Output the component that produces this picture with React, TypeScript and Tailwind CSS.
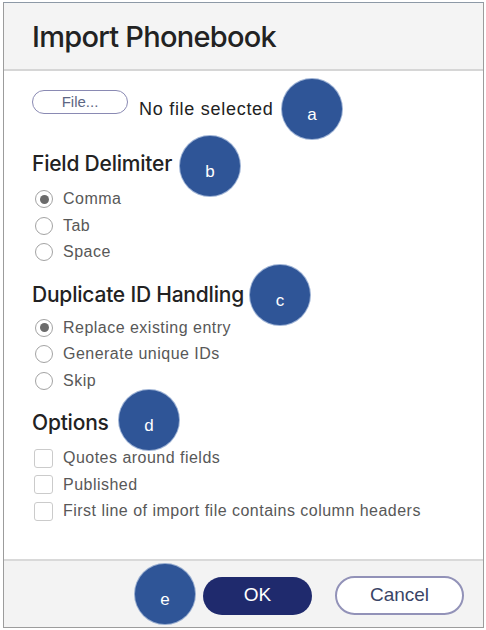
import React from "react";

const HEAD = { fontFamily: "Inter, 'Liberation Sans', sans-serif" };
const BODY = { fontFamily: "'Liberation Sans', Arial, sans-serif" };

function Radio({ label, checked }: { label: string; checked?: boolean }) {
  return (
    <div className="flex h-[26.5px] items-center">
      <span className="ml-[3px] flex h-[18px] w-[18px] items-center justify-center rounded-full border-[1.5px] border-[#a3a3a3] bg-white">
        {checked && <span className="h-[9px] w-[9px] rounded-full bg-[#6b6b6b]" />}
      </span>
      <span className="ml-[10px] text-[16px] tracking-[0.03em] text-[#585858]">{label}</span>
    </div>
  );
}

function Check({ label }: { label: string }) {
  return (
    <div className="flex h-[26.5px] items-center">
      <span className="ml-[2px] h-[19px] w-[19px] rounded-[3px] border-[1.5px] border-[#cbcbcb] bg-white" />
      <span className="ml-[10px] text-[16px] tracking-[0.03em] text-[#585858]">{label}</span>
    </div>
  );
}

function Badge({ letter, className }: { letter: string; className: string }) {
  return (
    <div
      className={`absolute flex h-[60px] w-[60px] items-center justify-center rounded-full bg-[#2f5597] ring-1 ring-[#5a7db8]/60 ${className}`}
    >
      <span className="pt-[11px] text-[17px] text-white" style={BODY}>
        {letter}
      </span>
    </div>
  );
}

export default function App() {
  return (
    <div className="relative h-[630px] w-[486px] overflow-hidden bg-white" style={BODY}>
      <div className="ml-[3px] mt-[2px] flex h-[626px] w-[481px] flex-col border border-[#9c9c9c] border-t-[#8d99a6]">
        <div className="flex h-[68px] items-center border-b-2 border-[#d6d6d6] bg-[#f4f4f4] pl-[28px]">
          <h1 className="pt-[2px] text-[29px] font-medium tracking-tight text-[#222]" style={HEAD}>
            Import Phonebook
          </h1>
        </div>

        <div className="pl-[28px]">
          <div className="mt-[19px] flex items-start">
            <button className="flex h-[24px] w-[96px] items-center justify-center rounded-full border-[1.5px] border-[#8a8ab3] text-[15px] text-[#5d6683]">
              File...
            </button>
            <span className="ml-[11px] mt-[8px] text-[18px] leading-[22px] tracking-[0.04em] text-[#222]">
              No file selected
            </span>
          </div>

          <h2 className="mt-[31px] text-[21px] font-medium leading-[26px] tracking-[-0.01em] text-[#222]" style={HEAD}>
            Field Delimiter
          </h2>
          <div className="mt-[9px]">
            <Radio label="Comma" checked />
            <Radio label="Tab" />
            <Radio label="Space" />
          </div>

          <h2 className="mt-[16px] text-[21px] font-medium leading-[26px] tracking-[-0.01em] text-[#222]" style={HEAD}>
            Duplicate ID Handling
          </h2>
          <div className="mt-[7px]">
            <Radio label="Replace existing entry" checked />
            <Radio label="Generate unique IDs" />
            <Radio label="Skip" />
          </div>

          <h2 className="mt-[16px] text-[21px] font-medium leading-[26px] tracking-[-0.01em] text-[#222]" style={HEAD}>
            Options
          </h2>
          <div className="mt-[9px]">
            <Check label="Quotes around fields" />
            <Check label="Published" />
            <Check label="First line of import file contains column headers" />
          </div>
        </div>

        <div className="mt-auto flex h-[68px] items-center justify-end gap-[23px] border-t-2 border-[#d9d9d9] bg-[#f3f3f3] pr-[19px] pt-[3px]">
          <button className="h-[38px] w-[109px] rounded-full bg-[#1f2a6d] text-[19px] text-white">OK</button>
          <button className="h-[39px] w-[129px] rounded-full border-2 border-[#9292b8] bg-white text-[19px] text-[#3a4466]">
            Cancel
          </button>
        </div>
      </div>

      <Badge letter="a" className="left-[282px] top-[79px]" />
      <Badge letter="b" className="left-[180px] top-[136px]" />
      <Badge letter="c" className="left-[250px] top-[265px]" />
      <Badge letter="d" className="left-[119px] top-[390px]" />
      <Badge letter="e" className="left-[135px] top-[564px]" />
    </div>
  );
}
